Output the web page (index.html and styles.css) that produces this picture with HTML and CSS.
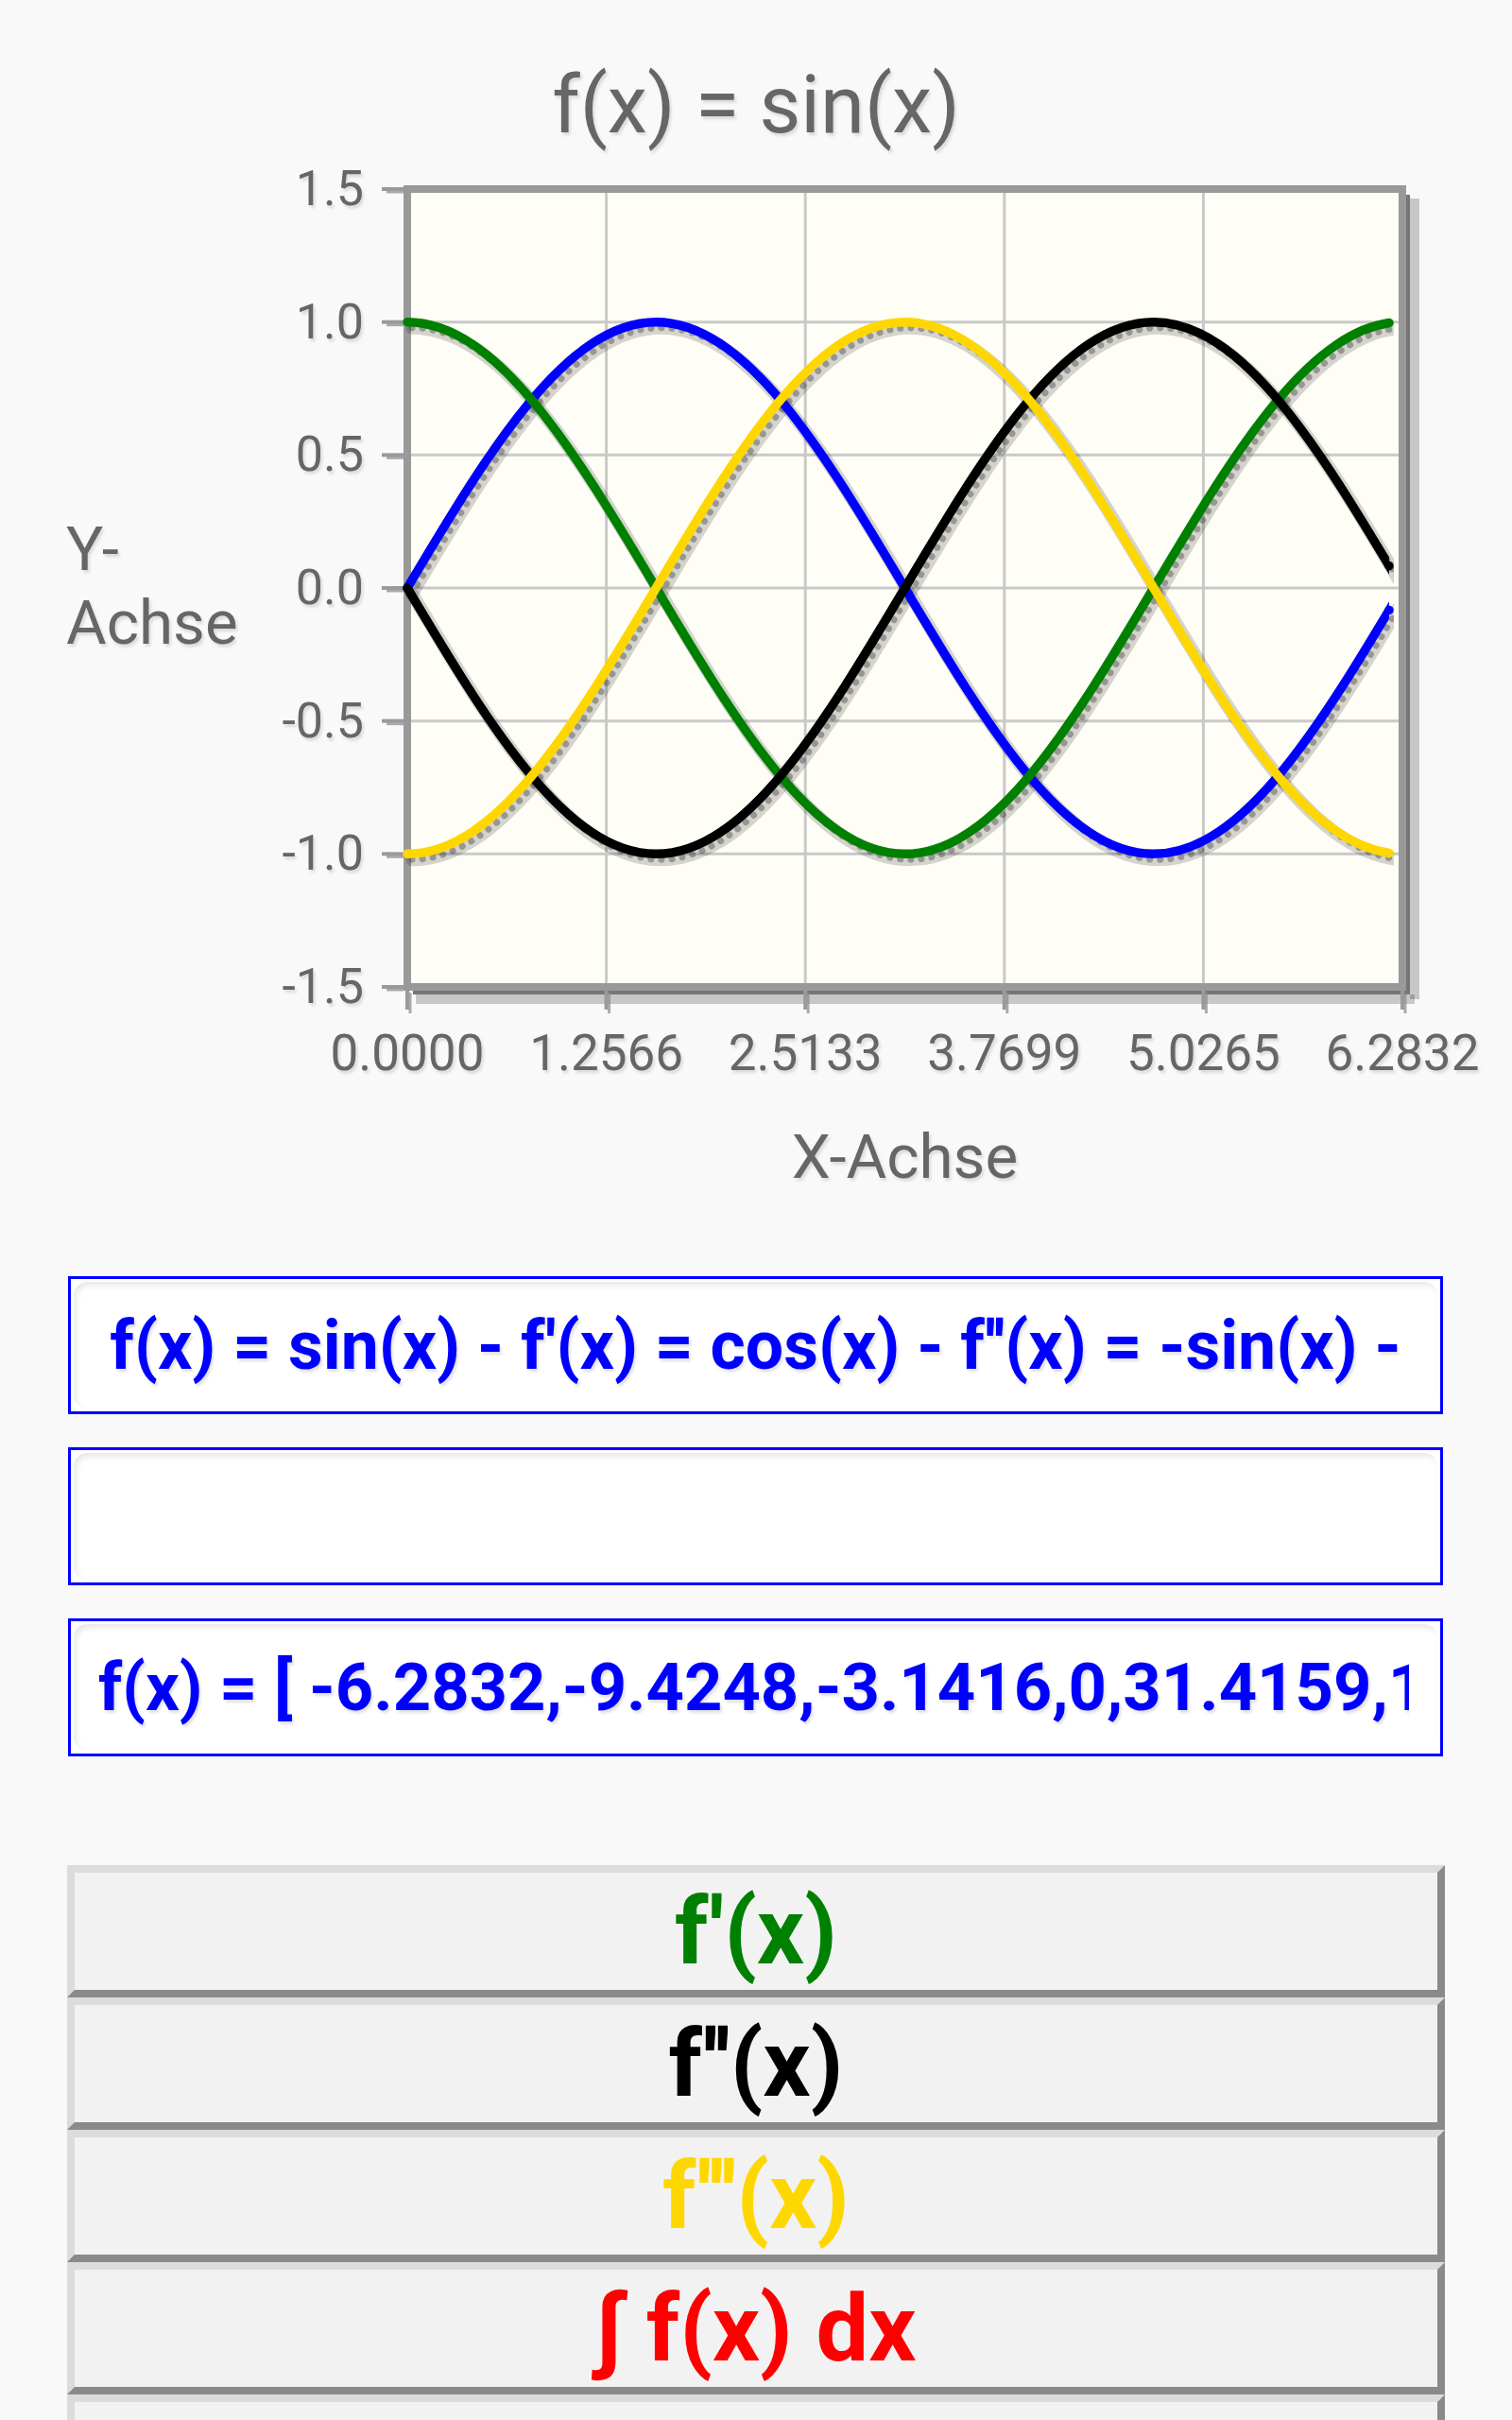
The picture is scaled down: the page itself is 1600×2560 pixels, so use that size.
FILE: index.html
```html
<!DOCTYPE html>
<html lang="de">
<head>
<meta charset="utf-8">
<title>f(x) = sin(x)</title>
<link rel="stylesheet" href="styles.css">
</head>
<body>
<main class="page">
  <svg class="chart" width="1600" height="1350" viewBox="0 0 1600 1350" xmlns="http://www.w3.org/2000/svg">
    <defs>
      <clipPath id="dataClip"><rect x="380" y="150" width="1090" height="950"/></clipPath>
      <filter id="txtShadow" x="-10%" y="-10%" width="130%" height="140%">
        <feDropShadow dx="2" dy="3" stdDeviation="1.5" flood-color="#000" flood-opacity="0.12"/>
      </filter>
    </defs>

    <text class="title" x="800" y="140" filter="url(#txtShadow)">f(x) = sin(x)</text>

    <!-- plot background -->
    <rect class="plot-bg" x="431" y="200" width="1053" height="844"/>

    <!-- grid -->
    <g class="grid">
      <line x1="641.6" y1="204" x2="641.6" y2="1040"/>
      <line x1="852.2" y1="204" x2="852.2" y2="1040"/>
      <line x1="1062.8" y1="204" x2="1062.8" y2="1040"/>
      <line x1="1273.4" y1="204" x2="1273.4" y2="1040"/>
      <line x1="435" y1="340.67" x2="1480" y2="340.67"/>
      <line x1="435" y1="481.33" x2="1480" y2="481.33"/>
      <line x1="435" y1="622" x2="1480" y2="622"/>
      <line x1="435" y1="762.67" x2="1480" y2="762.67"/>
      <line x1="435" y1="903.33" x2="1480" y2="903.33"/>
    </g>

    <!-- frame shadow -->
    <g class="frame-shadow">
      <line class="fs-soft" x1="1497" y1="210" x2="1497" y2="1057"/>
      <line class="fs-soft" x1="440" y1="1057" x2="1497" y2="1057"/>
      <line class="fs-dark" x1="1490" y1="206" x2="1490" y2="1050"/>
      <line class="fs-dark" x1="437" y1="1050" x2="1492" y2="1050"/>
    </g>

    <!-- frame -->
    <rect class="frame" x="431" y="200" width="1053" height="844"/>

    <!-- ticks -->
    <g class="tick-shadow">
      <line x1="409" y1="203" x2="427" y2="203"/>
      <line x1="409" y1="343.67" x2="427" y2="343.67"/>
      <line x1="409" y1="484.33" x2="427" y2="484.33"/>
      <line x1="409" y1="625" x2="427" y2="625"/>
      <line x1="409" y1="765.67" x2="427" y2="765.67"/>
      <line x1="409" y1="906.33" x2="427" y2="906.33"/>
      <line x1="409" y1="1047" x2="427" y2="1047"/>
      <line x1="434" y1="1050" x2="434" y2="1072"/>
      <line x1="644.6" y1="1050" x2="644.6" y2="1072"/>
      <line x1="855.2" y1="1050" x2="855.2" y2="1072"/>
      <line x1="1065.8" y1="1050" x2="1065.8" y2="1072"/>
      <line x1="1276.4" y1="1050" x2="1276.4" y2="1072"/>
      <line x1="1487" y1="1050" x2="1487" y2="1072"/>
    </g>
    <g class="tick">
      <line x1="404" y1="200" x2="427" y2="200"/>
      <line x1="404" y1="340.67" x2="427" y2="340.67"/>
      <line x1="404" y1="481.33" x2="427" y2="481.33"/>
      <line x1="404" y1="622" x2="427" y2="622"/>
      <line x1="404" y1="762.67" x2="427" y2="762.67"/>
      <line x1="404" y1="903.33" x2="427" y2="903.33"/>
      <line x1="404" y1="1044" x2="427" y2="1044"/>
      <line x1="431" y1="1048" x2="431" y2="1068"/>
      <line x1="641.6" y1="1048" x2="641.6" y2="1068"/>
      <line x1="852.2" y1="1048" x2="852.2" y2="1068"/>
      <line x1="1062.8" y1="1048" x2="1062.8" y2="1068"/>
      <line x1="1273.4" y1="1048" x2="1273.4" y2="1068"/>
      <line x1="1484" y1="1048" x2="1484" y2="1068"/>
    </g>

    <!-- y labels -->
    <g class="ylabels" filter="url(#txtShadow)">
      <text x="385" y="217">1.5</text>
      <text x="385" y="357.67">1.0</text>
      <text x="385" y="498.33">0.5</text>
      <text x="385" y="639">0.0</text>
      <text x="385" y="779.67">-0.5</text>
      <text x="385" y="920.33">-1.0</text>
      <text x="385" y="1061">-1.5</text>
    </g>

    <!-- x labels -->
    <g class="xlabels" filter="url(#txtShadow)">
      <text x="431" y="1132">0.0000</text>
      <text x="641.6" y="1132">1.2566</text>
      <text x="852.2" y="1132">2.5133</text>
      <text x="1062.8" y="1132">3.7699</text>
      <text x="1273.4" y="1132">5.0265</text>
      <text x="1484" y="1132">6.2832</text>
    </g>

    <g class="axis-title" filter="url(#txtShadow)">
      <text x="70" y="603">Y-</text>
      <text x="70" y="681">Achse</text>
      <text class="centered" x="957.5" y="1246">X-Achse</text>
    </g>

    <!-- curve shadows -->
    <g transform="translate(5,6)">
      <g clip-path="url(#dataClip)">
        <g class="shadow-band">
          <path d="M431,622 c85.85,-144.12 167.98,-281.33 263.25,-281.33 c95.27,0 177.4,137.21 263.25,281.33 c85.85,144.12 167.98,281.33 263.25,281.33 c95.27,0 177.4,-137.21 263.25,-281.33"/>
          <path d="M431,340.67 c95.27,0 177.4,137.21 263.25,281.33 c85.85,144.12 167.98,281.33 263.25,281.33 c95.27,0 177.4,-137.21 263.25,-281.33 c85.85,-144.12 167.98,-281.33 263.25,-281.33"/>
          <path d="M431,622 c85.85,144.12 167.98,281.33 263.25,281.33 c95.27,0 177.4,-137.21 263.25,-281.33 c85.85,-144.12 167.98,-281.33 263.25,-281.33 c95.27,0 177.4,137.21 263.25,281.33"/>
          <path d="M431,903.33 c95.27,0 177.4,-137.21 263.25,-281.33 c85.85,-144.12 167.98,-281.33 263.25,-281.33 c95.27,0 177.4,137.21 263.25,281.33 c85.85,144.12 167.98,281.33 263.25,281.33"/>
        </g>
        <g class="shadow-dots">
          <path d="M431,622 c85.85,-144.12 167.98,-281.33 263.25,-281.33 c95.27,0 177.4,137.21 263.25,281.33 c85.85,144.12 167.98,281.33 263.25,281.33 c95.27,0 177.4,-137.21 263.25,-281.33"/>
          <path d="M431,340.67 c95.27,0 177.4,137.21 263.25,281.33 c85.85,144.12 167.98,281.33 263.25,281.33 c95.27,0 177.4,-137.21 263.25,-281.33 c85.85,-144.12 167.98,-281.33 263.25,-281.33"/>
          <path d="M431,622 c85.85,144.12 167.98,281.33 263.25,281.33 c95.27,0 177.4,-137.21 263.25,-281.33 c85.85,-144.12 167.98,-281.33 263.25,-281.33 c95.27,0 177.4,137.21 263.25,281.33"/>
          <path d="M431,903.33 c95.27,0 177.4,-137.21 263.25,-281.33 c85.85,-144.12 167.98,-281.33 263.25,-281.33 c95.27,0 177.4,137.21 263.25,281.33 c85.85,144.12 167.98,281.33 263.25,281.33"/>
        </g>
      </g>
    </g>

    <!-- curves -->
    <g clip-path="url(#dataClip)" class="curves">
      <path class="c-blue" d="M431,622 c85.85,-144.12 167.98,-281.33 263.25,-281.33 c95.27,0 177.4,137.21 263.25,281.33 c85.85,144.12 167.98,281.33 263.25,281.33 c95.27,0 177.4,-137.21 263.25,-281.33"/>
      <path class="c-green" d="M431,340.67 c95.27,0 177.4,137.21 263.25,281.33 c85.85,144.12 167.98,281.33 263.25,281.33 c95.27,0 177.4,-137.21 263.25,-281.33 c85.85,-144.12 167.98,-281.33 263.25,-281.33"/>
      <path class="c-black" d="M431,622 c85.85,144.12 167.98,281.33 263.25,281.33 c95.27,0 177.4,-137.21 263.25,-281.33 c85.85,-144.12 167.98,-281.33 263.25,-281.33 c95.27,0 177.4,137.21 263.25,281.33"/>
      <path class="c-yellow" d="M431,903.33 c95.27,0 177.4,-137.21 263.25,-281.33 c85.85,-144.12 167.98,-281.33 263.25,-281.33 c95.27,0 177.4,137.21 263.25,281.33 c85.85,144.12 167.98,281.33 263.25,281.33"/>
    </g>
    <g class="caps">
      <circle class="f-blue" cx="1470" cy="645.4" r="4.75"/>
      <circle class="f-green" cx="1470" cy="341.6" r="4.75"/>
      <circle class="f-black" cx="1470" cy="598.6" r="4.75"/>
      <circle class="f-yellow" cx="1470" cy="902.4" r="4.75"/>
    </g>
  </svg>

  <section class="outputs">
    <div class="field"><div class="field-inner centered-text"><span class="field-text">f(x) = sin(x) - f'(x) = cos(x) - f''(x) = -sin(x) -</span></div></div>
    <div class="field"><div class="field-inner"></div></div>
    <div class="field"><div class="field-inner left-text"><span class="field-text data-text">f(x) = [ -6.2832,-9.4248,-3.1416,0,31.4159,12.5664 ]</span></div></div>
  </section>

  <section class="buttons">
    <button class="btn btn-green" type="button">f'(x)</button>
    <button class="btn btn-black" type="button">f''(x)</button>
    <button class="btn btn-yellow" type="button">f'''(x)</button>
    <button class="btn btn-red" type="button">∫ f(x) dx</button>
    <button class="btn btn-blue" type="button" aria-label="weitere Funktion"></button>
  </section>
</main>
</body>
</html>
```

FILE: styles.css
```css
html, body {
  margin: 0;
  padding: 0;
  background: #f9f9fa;
}

.page {
  width: 1600px;
  font-family: Roboto, "Liberation Sans", sans-serif;
}

.chart {
  display: block;
}

.title {
  font-family: Roboto, "Liberation Sans", sans-serif;
  font-size: 85px;
  fill: #666666;
  text-anchor: middle;
}

.plot-bg {
  fill: #fffef6;
}

.grid line {
  stroke: #c9c9c9;
  stroke-width: 3;
}

.frame {
  fill: none;
  stroke: #999999;
  stroke-width: 8;
}

.fs-dark {
  stroke: #767676;
  stroke-width: 4;
}

.fs-soft {
  stroke: rgba(0, 0, 0, 0.2);
  stroke-width: 10;
}

.tick line {
  stroke: #9a9a9a;
  stroke-width: 4;
}

.tick-shadow line {
  stroke: #8a8a8a;
  stroke-width: 3;
  opacity: 0.7;
}

.ylabels text {
  font-family: Roboto, "Liberation Sans", sans-serif;
  font-size: 52px;
  fill: #666666;
  text-anchor: end;
}

.xlabels text {
  font-family: Roboto, "Liberation Sans", sans-serif;
  font-size: 53px;
  fill: #666666;
  text-anchor: middle;
}

.axis-title text {
  font-family: Roboto, "Liberation Sans", sans-serif;
  font-size: 65.5px;
  fill: #666666;
}

.axis-title .centered {
  text-anchor: middle;
}

.shadow-band path {
  fill: none;
  stroke: rgba(0, 0, 0, 0.17);
  stroke-width: 14;
  stroke-linecap: round;
}

.shadow-dots path {
  fill: none;
  stroke: rgba(60, 60, 60, 0.4);
  stroke-width: 7;
  stroke-linecap: round;
  stroke-dasharray: 0.1 11;
}

.curves path {
  fill: none;
  stroke-width: 9.5;
  stroke-linecap: round;
  stroke-linejoin: round;
}

.c-blue { stroke: #0000ff; }
.c-green { stroke: #008000; }
.c-black { stroke: #000000; }
.c-yellow { stroke: #ffd700; }

.f-blue { fill: #0000ff; }
.f-green { fill: #008000; }
.f-black { fill: #000000; }
.f-yellow { fill: #ffd700; }

/* output fields */
.outputs {
  margin-left: 72px;
  width: 1455px;
  display: flex;
  flex-direction: column;
  gap: 35px;
}

.field {
  box-sizing: border-box;
  height: 146px;
  border: 3px solid #0000ff;
  background: #ffffff;
  padding: 3px;
}

.field-inner {
  box-sizing: border-box;
  height: 100%;
  border-radius: 14px;
  box-shadow: inset 3px 4px 6px rgba(0, 0, 0, 0.09);
  display: flex;
  align-items: center;
  overflow: hidden;
  white-space: nowrap;
  font-family: Roboto, "Liberation Sans", sans-serif;
  font-weight: 700;
  font-size: 71.5px;
  color: #0000ff;
}

.field-text {
  text-shadow: 2px 3px 3px rgba(0, 0, 0, 0.12);
}

.centered-text {
  justify-content: center;
}

.left-text {
  justify-content: flex-start;
  padding-left: 26px;
  padding-right: 30px;
}

.left-text .field-text {
  display: block;
  flex: 1 1 auto;
  min-width: 0;
  overflow: hidden;
  padding: 6px 0;
}

.data-text {
  font-size: 70.5px;
}

/* buttons */
.buttons {
  margin-top: 115px;
  margin-left: 71px;
  width: 1458px;
  display: flex;
  flex-direction: column;
}

.btn {
  box-sizing: border-box;
  height: 140px;
  width: 100%;
  margin: 0;
  padding: 0;
  border-style: solid;
  border-width: 8px;
  border-color: #dcdcdc #8a8a8a #8a8a8a #dcdcdc;
  background: #f2f2f2;
  font-family: Roboto, "DejaVu Sans", sans-serif;
  font-weight: 700;
  font-size: 99px;
  line-height: 1;
  text-align: center;
}

.btn-green { color: #008000; }
.btn-black { color: #000000; }
.btn-yellow { color: #ffd700; }
.btn-red { color: #ff0000; }
.btn-blue { color: #0000ff; }
```
